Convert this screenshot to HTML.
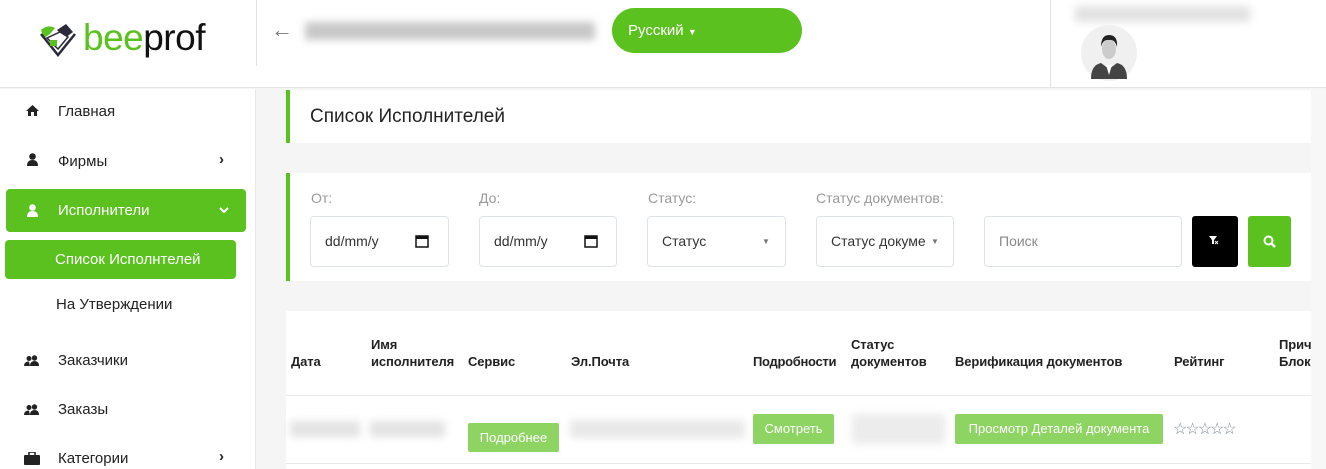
<!DOCTYPE html>
<html><head><meta charset="utf-8"><style>
*{box-sizing:border-box;margin:0;padding:0}
body{width:1326px;height:469px;overflow:hidden;background:#f5f5f5;font-family:"Liberation Sans",sans-serif;position:relative;color:#222}
.a{position:absolute}
.blur{filter:blur(4px);border-radius:2px}
.th{position:absolute;font-size:13px;font-weight:bold;color:#222;line-height:17px;letter-spacing:-0.1px}
.btn{position:absolute;background:#8ed462;color:#fff;font-size:13px;border-radius:2px;text-align:center}
.inp{position:absolute;top:216px;height:51px;background:#fff;border:1px solid #dde2e6;border-radius:4px;font-size:14px;color:#333;padding-left:14px;line-height:49px}
.lbl{position:absolute;top:190px;font-size:14px;color:#999}
.nav{position:absolute;left:0;width:256px;font-size:15px;color:#222}
</style></head><body>
<div class="a" style="left:0;top:0;width:1326px;height:88px;background:#fff;border-bottom:1px solid #e5e5e5"></div>
<div class="a" style="left:256px;top:0;width:1px;height:66px;background:#e3e3e3"></div>
<div class="a" style="left:1050px;top:0;width:1px;height:88px;background:#e3e3e3"></div>
<svg class="a" style="left:38px;top:22px" width="40" height="36" viewBox="0 0 40 36"><path d="M3 8 Q10 2 17 6 L12 12 L6 16Z" fill="#5ac11e"/><path d="M19 8 L28 2 L35 10 L27 16Z" fill="#2a2a3a"/><path d="M3 12 L20 33 L37 12" stroke="#2a2a3a" stroke-width="2.5" fill="none"/><path d="M9 16 L20 27 L30 15 L22 10Z" fill="#fff" stroke="#2a2a3a" stroke-width="1.5"/><rect x="12" y="18" width="7" height="6" fill="#5ac11e"/></svg>
<div class="a" style="left:83px;top:17px;font-size:37px;letter-spacing:-0.5px;color:#5ac11e;font-family:'Liberation Sans',sans-serif">bee<span style="color:#111">prof</span></div>
<div class="a" style="left:271px;top:17px;font-size:22px;color:#777">←</div>
<div class="a blur" style="left:305px;top:22px;width:290px;height:18px;background:#c8c8c8"></div>
<div class="a" style="left:612px;top:8px;width:190px;height:45px;background:#5ac11e;border-radius:23px;color:#fff;font-size:15px;line-height:45px;padding-left:16px">Русский <span style="font-size:9px">▼</span></div>
<div class="a blur" style="left:1075px;top:6px;width:175px;height:16px;background:#e2e2e2"></div>
<svg class="a" style="left:1081px;top:25px" width="56" height="56" viewBox="0 0 56 56"><circle cx="28" cy="28" r="28" fill="#f0f0f0"/><path d="M10 54 Q10 40 20 38 L28 44 L36 38 Q46 40 46 54Z" fill="#444"/><path d="M25 40 L28 50 L31 40Z" fill="#fff"/><ellipse cx="28" cy="24" rx="7" ry="10" fill="#ccc"/><path d="M20 22 Q20 10 28 10 Q37 10 36 22 Q34 14 28 15 Q22 14 20 22Z" fill="#222"/></svg>
<div class="a" style="left:0;top:89px;width:256px;height:380px;background:#fff;border-right:1px solid #e8e8e8"></div>
<svg class="a" style="left:26px;top:105px" width="13" height="11" viewBox="0 0 13 11"><path d="M6.5 0 L13 6 L11 6 L11 11 L8 11 L8 7 L5 7 L5 11 L2 11 L2 6 L0 6Z" fill="#222"/></svg>
<div class="nav" style="top:103px"><span class="a" style="left:58px">Главная</span></div>
<svg class="a" style="left:27px;top:153px" width="11" height="13" viewBox="0 0 11 13"><circle cx="5.5" cy="3.5" r="3.3" fill="#222"/><path d="M0 13 Q0 7 5.5 7 Q11 7 11 13Z" fill="#222"/></svg>
<div class="nav" style="top:153px"><span class="a" style="left:58px">Фирмы</span><span class="a" style="left:219px;top:-2px;font-weight:bold">›</span></div>
<div class="a" style="left:6px;top:189px;width:240px;height:43px;background:#5ac11e;border-radius:4px"></div>
<svg class="a" style="left:27px;top:204px" width="11" height="13" viewBox="0 0 11 13"><circle cx="5.5" cy="3.5" r="3.3" fill="#fff"/><path d="M0 13 Q0 7 5.5 7 Q11 7 11 13Z" fill="#fff"/></svg>
<div class="nav" style="top:202px;color:#fff"><span class="a" style="left:58px">Исполнители</span></div>
<svg class="a" style="left:219px;top:207px" width="10" height="6" viewBox="0 0 10 6"><path d="M1 1 L5 5 L9 1" stroke="#fff" stroke-width="2" fill="none"/></svg>
<div class="a" style="left:5px;top:240px;width:231px;height:39px;background:#5ac11e;border-radius:4px;color:#fff;font-size:15px;line-height:39px;padding-left:50px">Список Исполнтелей</div>
<div class="nav" style="top:296px"><span class="a" style="left:56px">На Утверждении</span></div>
<svg class="a" style="left:24px;top:355px" width="16" height="11" viewBox="0 0 16 11"><circle cx="10.5" cy="3" r="2.7" fill="#222"/><path d="M6 11 Q6 6 10.5 6 Q15 6 15 11Z" fill="#222"/><circle cx="5" cy="3.5" r="2.5" fill="#222"/><path d="M0 11 Q0 6.5 5 6.5 L6 11Z" fill="#222"/></svg>
<div class="nav" style="top:352px"><span class="a" style="left:58px">Заказчики</span></div>
<svg class="a" style="left:24px;top:404px" width="16" height="11" viewBox="0 0 16 11"><circle cx="10.5" cy="3" r="2.7" fill="#222"/><path d="M6 11 Q6 6 10.5 6 Q15 6 15 11Z" fill="#222"/><circle cx="5" cy="3.5" r="2.5" fill="#222"/><path d="M0 11 Q0 6.5 5 6.5 L6 11Z" fill="#222"/></svg>
<div class="nav" style="top:401px"><span class="a" style="left:58px">Заказы</span></div>
<svg class="a" style="left:24px;top:452px" width="16" height="13" viewBox="0 0 16 13"><rect x="5" y="0" width="6" height="4" fill="none" stroke="#222" stroke-width="1.6"/><rect x="0" y="3" width="16" height="10" rx="1" fill="#222"/></svg>
<div class="nav" style="top:450px"><span class="a" style="left:58px">Категории</span><span class="a" style="left:219px;top:-2px;font-weight:bold">›</span></div>
<div class="a" style="left:1311px;top:89px;width:15px;height:380px;background:#f7f7f7"></div>
<div class="a" style="left:286px;top:90px;width:1025px;height:53px;background:#fff;border-left:4px solid #5ac11e"></div>
<div class="a" style="left:310px;top:106px;font-size:19px;color:#222">Список Исполнителей</div>
<div class="a" style="left:286px;top:173px;width:1025px;height:108px;background:#fff;border-left:4px solid #5ac11e"></div>
<div class="lbl" style="left:311px">От:</div><div class="lbl" style="left:479px">До:</div><div class="lbl" style="left:648px">Статус:</div><div class="lbl" style="left:816px">Статус документов:</div>
<div class="inp" style="left:310px;width:139px">dd/mm/y<svg class="a" style="left:104px;top:17px" width="14" height="14" viewBox="0 0 14 14"><rect x="1" y="2" width="12" height="11" fill="none" stroke="#111" stroke-width="1.5"/><rect x="1" y="2" width="12" height="3" fill="#111"/></svg></div>
<div class="inp" style="left:479px;width:138px">dd/mm/y<svg class="a" style="left:104px;top:17px" width="14" height="14" viewBox="0 0 14 14"><rect x="1" y="2" width="12" height="11" fill="none" stroke="#111" stroke-width="1.5"/><rect x="1" y="2" width="12" height="3" fill="#111"/></svg></div>
<div class="inp" style="left:647px;width:139px">Статус<span class="a" style="left:114px;font-size:8px;color:#777">▼</span></div>
<div class="inp" style="left:816px;width:138px;overflow:hidden;white-space:nowrap">Статус докуме<span class="a" style="left:114px;font-size:8px;color:#777;background:#fff">▼</span></div>
<div class="inp" style="left:984px;width:198px;color:#888">Поиск</div>
<div class="a" style="left:1192px;top:216px;width:46px;height:51px;background:#000;border-radius:3px"></div>
<svg class="a" style="left:1209px;top:236px" width="10" height="9" viewBox="0 0 10 9"><path d="M0 0 L8 0 L5 4 L5 8 L3 8 L3 4Z" fill="#fff"/><path d="M6 5 L9 8 M9 5 L6 8" stroke="#fff" stroke-width="1"/></svg>
<div class="a" style="left:1248px;top:216px;width:43px;height:51px;background:#5ac11e;border-radius:3px"></div>
<svg class="a" style="left:1263px;top:235px" width="13" height="13" viewBox="0 0 13 13"><circle cx="5.5" cy="5.5" r="4" stroke="#fff" stroke-width="2" fill="none"/><path d="M8.5 8.5 L12 12" stroke="#fff" stroke-width="2.5"/></svg>
<div class="a" style="left:286px;top:311px;width:1025px;height:158px;background:#fff"></div>
<div class="a" style="left:286px;top:395px;width:1025px;height:1px;background:#e8e8e8"></div>
<div class="a" style="left:286px;top:463px;width:1025px;height:1px;background:#e8e8e8"></div>
<div class="th" style="left:291px;top:353px">Дата</div>
<div class="th" style="left:371px;top:336px">Имя<br>исполнителя</div>
<div class="th" style="left:468px;top:353px">Сервис</div>
<div class="th" style="left:571px;top:353px">Эл.Почта</div>
<div class="th" style="left:753px;top:353px;letter-spacing:-0.3px">Подробности</div>
<div class="th" style="left:851px;top:336px">Статус<br>документов</div>
<div class="th" style="left:955px;top:353px">Верификация документов</div>
<div class="th" style="left:1174px;top:353px">Рейтинг</div>
<div class="th" style="left:1279px;top:336px;width:32px;overflow:hidden;white-space:nowrap">Прич<br>Блок</div>
<div class="a blur" style="left:290px;top:421px;width:70px;height:16px;background:#e3e3e3"></div>
<div class="a blur" style="left:370px;top:421px;width:75px;height:16px;background:#e3e3e3"></div>
<div class="btn" style="left:468px;top:423px;width:91px;height:29px;line-height:29px">Подробнее</div>
<div class="a blur" style="left:570px;top:420px;width:175px;height:18px;background:#e8e8e8"></div>
<div class="btn" style="left:753px;top:414px;width:81px;height:30px;line-height:30px">Смотреть</div>
<div class="a blur" style="left:852px;top:414px;width:93px;height:30px;background:#ececec"></div>
<div class="btn" style="left:955px;top:414px;width:208px;height:30px;line-height:30px">Просмотр Деталей документа</div>
<div class="a" style="left:1173px;top:419px;font-size:16px;color:#7a8a98;letter-spacing:-2px">☆☆☆☆☆</div>
</body></html>
